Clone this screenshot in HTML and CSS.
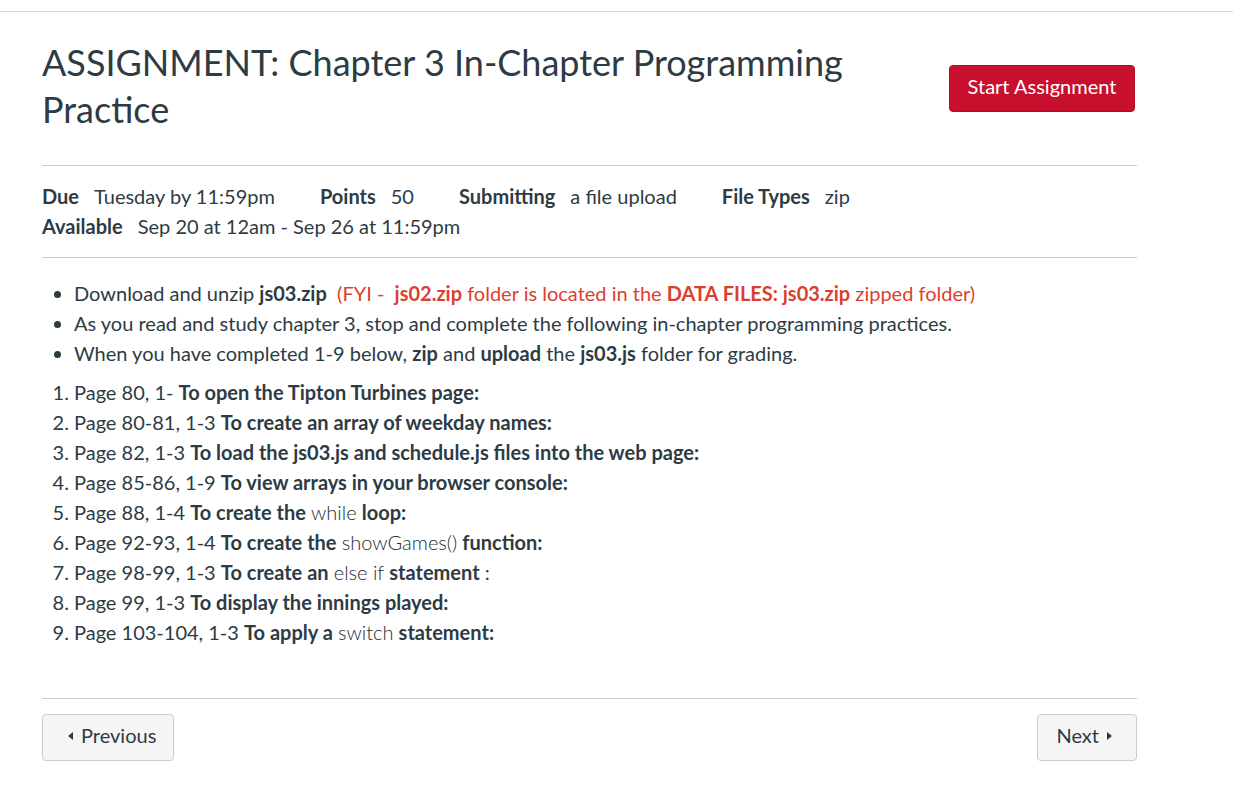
FILE: index.html
```html
<!DOCTYPE html>
<html lang="en">
<head>
<meta charset="utf-8">
<title>ASSIGNMENT: Chapter 3 In-Chapter Programming Practice</title>
<link rel="stylesheet" href="styles.css">
</head>
<body>
<div class="topbar"></div>
<main class="content">
  <div class="header-row">
    <h1 class="title">ASSIGNMENT: Chapter 3 In-Chapter Programming Practice</h1>
    <button class="btn-primary" type="button">Start Assignment</button>
  </div>
  <div class="details">
    <div class="details-line">
      <span class="item"><span class="label">Due</span><span class="value">Tuesday by 11:59pm</span></span>
      <span class="item"><span class="label">Points</span><span class="value">50</span></span>
      <span class="item"><span class="label">Submitting</span><span class="value">a file upload</span></span>
      <span class="item"><span class="label">File Types</span><span class="value">zip</span></span>
    </div>
    <div class="details-line">
      <span class="item"><span class="label">Available</span><span class="value">Sep 20 at 12am - Sep 26 at 11:59pm</span></span>
    </div>
  </div>
  <div class="description">
    <ul class="bullets">
      <li>Download and unzip <strong>js03.zip</strong>&nbsp; <span class="red">(FYI - &nbsp;<strong>js02.zip</strong> folder is located in the <strong>DATA FILES: js03.zip</strong> zipped folder)</span></li>
      <li>As you read and study chapter 3, stop and complete the following in-chapter programming practices.</li>
      <li>When you have completed 1-9 below, <strong>zip</strong> and <strong>upload</strong> the <strong>js03.js</strong> folder for grading.</li>
    </ul>
    <ol class="steps">
      <li>Page 80, 1- <strong>To open the Tipton Turbines page:</strong></li>
      <li>Page 80-81, 1-3 <strong>To create an array of weekday names:</strong></li>
      <li>Page 82, 1-3 <strong>To load the js03.js and schedule.js files into the web page:</strong></li>
      <li>Page 85-86, 1-9 <strong>To view arrays in your browser console:</strong></li>
      <li>Page 88, 1-4 <strong>To create the</strong> <span class="light">while</span> <strong>loop:</strong></li>
      <li>Page 92-93, 1-4 <strong>To create the</strong> <span class="light">showGames()</span> <strong>function:</strong></li>
      <li>Page 98-99, 1-3 <strong>To create an</strong> <span class="light">else if</span> <strong>statement</strong> :</li>
      <li>Page 99, 1-3 <strong>To display the innings played:</strong></li>
      <li>Page 103-104, 1-3 <strong>To apply a</strong> <span class="light">switch</span> <strong>statement:</strong></li>
    </ol>
  </div>
  <nav class="pager">
    <button class="btn btn-prev" type="button"><span class="tri tri-left"></span>Previous</button>
    <button class="btn btn-next" type="button">Next<span class="tri tri-right"></span></button>
  </nav>
</main>
</body>
</html>
```
FILE: styles.css
```css
* { box-sizing: border-box; }
html, body {
  margin: 0;
  padding: 0;
  background: #fff;
}
body {
  font-family: Lato, "Open Sans", "Liberation Sans", sans-serif;
  color: #2d3b45;
  font-size: 20px;
}
.topbar {
  height: 12px;
  border-bottom: 1px solid #d7dadd;
}
.content {
  width: 1095px;
  margin-left: 42px;
}
.header-row {
  display: flex;
  justify-content: space-between;
  align-items: flex-start;
  padding-top: 27px;
  padding-bottom: 32px;
  border-bottom: 1px solid #c7cdd1;
}
.title {
  margin: 0;
  font-size: 36px;
  font-weight: 400;
  line-height: 47px;
  max-width: 820px;
}
.btn-primary {
  margin-top: 26px;
  margin-right: 2px;
  height: 47px;
  width: 186px;
  padding: 0 0 5px;
  background: #c8102e;
  color: #fff;
  border: 1px solid #b00d28;
  border-radius: 4px;
  font-family: inherit;
  font-size: 20px;
  cursor: pointer;
}
.details {
  padding: 15px 0 16px;
  border-bottom: 1px solid #c7cdd1;
  font-size: 20px;
  line-height: 30px;
}
.details-line {
  display: flex;
}
.item {
  margin-right: 45px;
}
.label {
  font-weight: 700;
  margin-right: 15px;
}
.description {
  padding-top: 20px;
  font-size: 20px;
  line-height: 30px;
}
.bullets {
  margin: 0;
  padding-left: 32px;
  list-style: disc;
}
.steps {
  margin: 9px 0 0;
  padding-left: 32px;
}
strong { font-weight: 700; }
.red { color: #db3f2e; }
.light { font-weight: 300; color: #1f2a33; }
.pager {
  margin-top: 51px;
  border-top: 1px solid #c7cdd1;
  padding-top: 15px;
  display: flex;
  justify-content: space-between;
}
.btn {
  height: 47px;
  background: #f5f5f5;
  color: #2d3b45;
  border: 1px solid #c7cdd1;
  border-radius: 4px;
  font-family: inherit;
  font-size: 20px;
  display: inline-flex;
  align-items: center;
  cursor: pointer;
}
.btn-prev { padding: 0 17px 6px 25px; }
.btn-next { padding: 0 24px 6px 18px; }
.tri {
  display: inline-block;
  width: 0;
  height: 0;
  border-top: 4px solid transparent;
  border-bottom: 4px solid transparent;
}
.tri-left {
  border-right: 5px solid #2d3b45;
  margin-right: 8px;
  margin-top: 3px;
}
.tri-right {
  border-left: 5px solid #2d3b45;
  margin-left: 8px;
  margin-top: 3px;
}
```
